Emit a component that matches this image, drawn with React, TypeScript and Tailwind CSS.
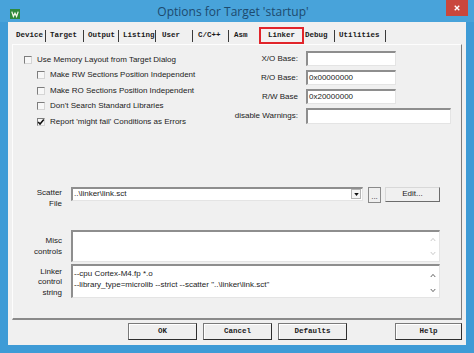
import React from 'react';

const sans = "font-['Liberation_Sans',Arial,sans-serif]";
const mono = "font-['Liberation_Mono',monospace]";

const tabs = [
  { label: 'Device', w: 'w-[33px]', pl: 'pl-[3px]', sep: true },
  { label: 'Target', w: 'w-[38px]', pl: 'pl-[4px]', sep: true },
  { label: 'Output', w: 'w-[35px]', pl: 'pl-[4px]', sep: true },
  { label: 'Listing', w: 'w-[37px]', pl: 'pl-[4px]', sep: true },
  { label: 'User', w: 'w-[37px]', pl: 'pl-[6px]', sep: true },
  { label: 'C/C++', w: 'w-[36px]', pl: 'pl-[5px]', sep: true },
  { label: 'Asm', w: 'w-[30px]', pl: 'pl-[5px]', sep: false },
];

const tabsAfter = [
  { label: 'Debug', w: 'w-[31px]', pl: 'pl-[1px]' },
  { label: 'Utilities', w: 'w-[51px]', pl: 'pl-[4px]' },
];

const Check = ({ checked = false }: { checked?: boolean }) => (
  <span className="relative w-[8px] h-[8px] shrink-0 bg-[#f7f7f7] border border-t-[#7d7d7d] border-l-[#7d7d7d] border-r-[#d5d5d5] border-b-[#d5d5d5]">
    {checked && (
      <svg viewBox="0 0 8 8" className="absolute left-[-1px] top-[-1px] w-[8px] h-[8px]">
        <path d="M1.2 4 L3 6 L6.8 1.4" fill="none" stroke="#111" strokeWidth="1.5" />
      </svg>
    )}
  </span>
);

const CheckRow = ({ label, checked, indent }: { label: string; checked?: boolean; indent?: boolean }) => (
  <div className={`flex items-center h-[15.5px] gap-[5px] ${indent ? 'pl-[13px]' : ''}`}>
    <Check checked={checked} />
    <span className="text-[8px] leading-none text-[#1b1b1b] whitespace-nowrap">{label}</span>
  </div>
);

const sunken =
  'bg-white border-t-2 border-l-2 border-r border-b border-t-[#8e8e8e] border-l-[#8e8e8e] border-r-[#e4e4e4] border-b-[#e4e4e4]';

const BaseRow = ({ label, value, wide }: { label: string; value?: string; wide?: boolean }) => (
  <div className="flex items-center">
    <span className="w-[70px] text-right text-[8px] leading-none text-[#1b1b1b] whitespace-nowrap">{label}</span>
    <div
      className={`ml-[8px] ${wide ? 'w-[145px] h-[16px]' : 'w-[90px] h-[15px]'} ${sunken} flex items-center pl-[1px] text-[8px] text-[#1b1b1b]`}
    >
      {value}
    </div>
  </div>
);

const Chevron = ({ up, color }: { up?: boolean; color: string }) => (
  <svg viewBox="0 0 8 6" className="w-[6px] h-[5px]">
    <path d={up ? 'M1 5 L4 1.5 L7 5' : 'M1 1 L4 4.5 L7 1'} fill="none" stroke={color} strokeWidth="1.2" />
  </svg>
);

const Button = ({ label, w }: { label: string; w: string }) => (
  <div
    className={`${w} h-[17px] flex items-center justify-center bg-[#efefef] border border-[#7a7a7a] border-r-[#2e2e2e] border-b-[#2e2e2e] shadow-[inset_1px_1px_0_#ffffff] ${mono} font-bold text-[7.5px] text-[#1c1c1c]`}
  >
    {label}
  </div>
);

export default function App() {
  return (
    <div className={`w-[474px] h-[353px] bg-[#3e9bd6] flex flex-col overflow-hidden ${sans}`}>
      {/* title bar */}
      <div className="h-[22px] flex items-start bg-[#48a3da]">
        <div className="mt-[9px] ml-[10px] w-[10px] h-[10px] bg-[#2f8a3c] flex items-center justify-center">
          <svg viewBox="0 0 10 10" className="w-[8px] h-[8px]">
            <path d="M1 2 L3 8 L5 4 L7 8 L9 2" fill="none" stroke="#f2f7e8" strokeWidth="1.6" />
          </svg>
        </div>
        <div className="flex-1 text-center pt-[4px] font-['Open_Sans',sans-serif] text-[12px] leading-[16px] text-[#1d4a6e]">
          Options for Target 'startup'
        </div>
        <div className="mr-[6px] w-[22px] h-[16px] bg-[#c9473d] flex items-center justify-center">
          <svg viewBox="0 0 8 8" className="w-[6px] h-[6px]">
            <path d="M1 1 L7 7 M7 1 L1 7" stroke="#fff" strokeWidth="1.8" />
          </svg>
        </div>
      </div>

      {/* client */}
      <div className="mx-[8px] h-[323px] bg-[#f0f0f0] flex flex-col">
        {/* tabs */}
        <div className={`mt-[5px] h-[17px] pl-[5px] flex ${mono} font-bold text-[7.5px] text-[#1a1a1a]`}>
          {tabs.map((t) => (
            <div key={t.label} className={`${t.w} ${t.pl} h-full flex items-center`}>
              <span className="whitespace-nowrap">{t.label}</span>
              {t.sep && <span className="ml-auto w-px h-[12px] bg-[#3a3a3a]" />}
            </div>
          ))}
          <div className="w-[45px] h-full border-2 border-[#e1252b] bg-[#f2f2f2] pl-[7px] flex items-center">
            <span className="whitespace-nowrap">Linker</span>
          </div>
          {tabsAfter.map((t) => (
            <div key={t.label} className={`${t.w} ${t.pl} h-full flex items-center`}>
              <span className="whitespace-nowrap">{t.label}</span>
              <span className="ml-auto w-px h-[12px] bg-[#3a3a3a]" />
            </div>
          ))}
        </div>

        {/* panel */}
        <div className="mx-[4px] h-[276px] border-t border-l border-t-[#fdfdfd] border-l-[#fdfdfd] border-r border-r-[#7c7c7c] border-b-2 border-b-[#8a8a8a] flex flex-col">
          <div className="flex">
            <div className="pl-[11px] pt-[7px] w-[215px] flex flex-col">
              <CheckRow label="Use Memory Layout from Target Dialog" />
              <CheckRow indent label="Make RW Sections Position Independent" />
              <CheckRow indent label="Make RO Sections Position Independent" />
              <CheckRow indent label="Don't Search Standard Libraries" />
              <CheckRow indent checked label="Report 'might fail' Conditions as Errors" />
            </div>
            <div className="pt-[6px] flex flex-col gap-[4px]">
              <BaseRow label="X/O Base:" />
              <BaseRow label="R/O Base:" value="0x00000000" />
              <BaseRow label="R/W Base" value="0x20000000" />
              <BaseRow label="disable Warnings:" wide />
            </div>
          </div>

          {/* scatter file */}
          <div className="mt-[57px] h-[22px] flex items-start">
            <div className="w-[49px] text-right text-[8px] leading-[11px] text-[#1b1b1b]">
              Scatter
              <br />
              File
            </div>
            <div className={`ml-[9px] w-[292px] h-[14px] ${sunken} flex items-center pl-[1px] pr-[1px]`}>
              <span className="flex-1 text-[8px] text-[#1b1b1b] whitespace-nowrap">..\linker\link.sct</span>
              <div className="w-[10px] h-[10px] bg-[#f4f4f4] border border-[#b4b4b4] flex items-center justify-center">
                <svg viewBox="0 0 6 4" className="w-[5px] h-[3px]">
                  <path d="M0 0 L6 0 L3 4 Z" fill="#111" />
                </svg>
              </div>
            </div>
            <div className="ml-[5px] w-[13px] h-[16px] bg-[#efefef] border border-[#8a8a8a] flex items-end justify-center text-[8px] leading-[10px] text-[#333]">
              ...
            </div>
            <div className="ml-[4px] w-[55px] h-[15px] bg-[#f0f0f0] border border-t-[#d8d8d8] border-l-[#d8d8d8] border-r-[#6c6c6c] border-b-[#6c6c6c] flex items-center justify-center text-[8px] text-[#1b1b1b]">
              Edit...
            </div>
          </div>

          {/* misc controls */}
          <div className="mt-[21px] flex items-center">
            <div className="w-[49px] text-right text-[8px] leading-[11px] text-[#1b1b1b]">
              Misc
              <br />
              controls
            </div>
            <div className={`ml-[9px] w-[369px] h-[32px] ${sunken} flex justify-end`}>
              <div className="w-[12px] flex flex-col items-center justify-between py-[5px]">
                <Chevron up color="#c4c4c4" />
                <Chevron color="#c4c4c4" />
              </div>
            </div>
          </div>

          {/* linker control string */}
          <div className="mt-[2px] flex items-start">
            <div className="w-[49px] pt-[3px] text-right text-[8px] leading-[10.5px] text-[#1b1b1b]">
              Linker
              <br />
              control
              <br />
              string
            </div>
            <div className={`ml-[9px] w-[369px] h-[34px] ${sunken} flex`}>
              <div className="flex-1 pl-[1px] pt-[2px] text-[8px] leading-[11px] text-[#1b1b1b] whitespace-nowrap">
                --cpu Cortex-M4.fp *.o
                <br />
                --library_type=microlib --strict --scatter "..\linker\link.sct"
              </div>
              <div className="w-[12px] flex flex-col items-center justify-between pt-[7px] pb-[4px]">
                <Chevron up color="#555" />
                <Chevron color="#555" />
              </div>
            </div>
          </div>
        </div>

        {/* buttons */}
        <div className="mt-[3px] pl-[120px] flex">
          <Button label="OK" w="w-[69px]" />
          <div className="ml-[6px]">
            <Button label="Cancel" w="w-[69px]" />
          </div>
          <div className="ml-[6px]">
            <Button label="Defaults" w="w-[69px]" />
          </div>
          <div className="ml-[48px]">
            <Button label="Help" w="w-[67px]" />
          </div>
        </div>
      </div>
    </div>
  );
}
